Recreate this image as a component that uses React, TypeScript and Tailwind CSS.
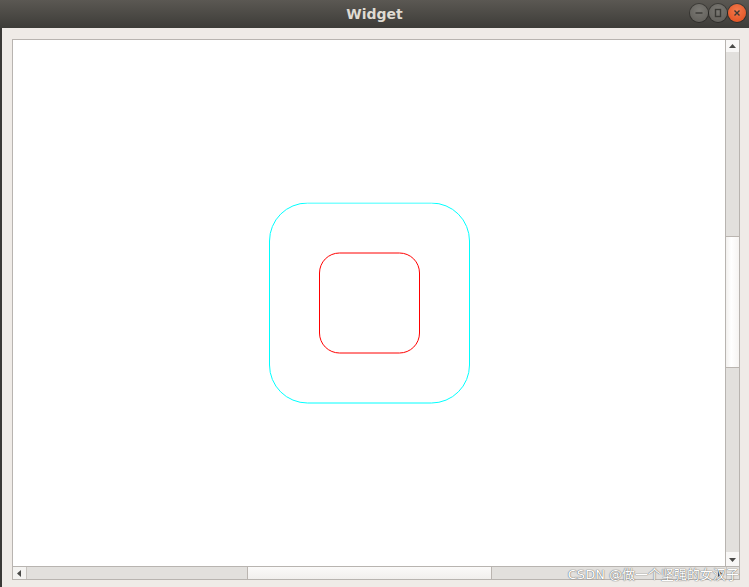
import React from "react";

function WinButton({ kind }: { kind: "min" | "max" | "close" }) {
  const bg =
    kind === "close"
      ? "bg-[radial-gradient(circle_at_50%_35%,#f27a4c,#df4b1c)]"
      : "bg-[radial-gradient(circle_at_50%_35%,#7b7974,#5d5b56)]";
  return (
    <div className={`flex h-[18px] w-[18px] items-center justify-center rounded-full ring-1 ring-black/30 ${bg}`}>
      <svg width="10" height="10" viewBox="0 0 10 10" fill="none" stroke="#3a3935" strokeWidth="1.4">
        {kind === "min" && <path d="M1.5 5h7" />}
        {kind === "max" && <rect x="2.5" y="1.5" width="5" height="7" />}
        {kind === "close" && <path d="M2.5 2.5l5 5M7.5 2.5l-5 5" />}
      </svg>
    </div>
  );
}

function Arrow({ dir }: { dir: "up" | "down" | "left" | "right" }) {
  const d = {
    up: "M1 6h7L4.5 2z",
    down: "M1 3h7L4.5 7z",
    left: "M6 1v7L2 4.5z",
    right: "M3 1v7l4-3.5z",
  }[dir];
  return (
    <svg width="9" height="9" viewBox="0 0 9 9">
      <path d={d} fill="#4a4a48" />
    </svg>
  );
}

export default function App() {
  return (
    <div className="relative flex h-[587px] w-[749px] flex-col overflow-hidden bg-[#efebe7] font-['DejaVu_Sans',sans-serif]">
      {/* title bar */}
      <div className="relative flex h-[28px] shrink-0 items-center justify-center bg-[linear-gradient(#5b5853,#3d3c38)]">
        <span className="text-[14px] font-bold text-[#dfdbd2]">Widget</span>
        <div className="absolute right-[3px] top-[4px] flex gap-[1px]">
          <WinButton kind="min" />
          <WinButton kind="max" />
          <WinButton kind="close" />
        </div>
      </div>

      {/* body */}
      <div className="flex-1 border-l-2 border-[#3a3936] pl-[10px] pt-[11px]">
        <div className="flex h-[541px] w-[728px] flex-col border border-[#b8b4b0]">
          <div className="flex h-[526px]">
            {/* canvas */}
            <div className="flex w-[712px] items-center justify-center bg-white">
              <svg width="202" height="202" viewBox="0 0 202 202" className="translate-x-[1px] translate-y-[0.5px]">
                <rect x="0.5" y="0.5" width="200" height="200" rx="38" ry="38" fill="none" stroke="#00ffff" strokeWidth="1" />
                <rect x="50.5" y="50.5" width="100" height="100" rx="20" ry="20" fill="none" stroke="#ff0000" strokeWidth="1" />
              </svg>
            </div>
            {/* vertical scrollbar */}
            <div className="flex w-[14px] flex-col border-l border-[#b8b4b0] bg-[#e2e0dd]">
              <div className="flex h-[12px] items-center justify-center bg-[#f8f7f6]">
                <Arrow dir="up" />
              </div>
              <div className="h-[184px]" />
              <div className="h-[132px] border-y border-[#bab5b0] bg-[linear-gradient(90deg,#f2f0ee,#ffffff_40%,#f6f4f2)]" />
              <div className="flex-1" />
              <div className="flex h-[14px] items-center justify-center bg-[#f8f7f6]">
                <Arrow dir="down" />
              </div>
            </div>
          </div>
          {/* horizontal scrollbar */}
          <div className="flex h-[13px] border-t border-[#b8b4b0] bg-[#e2e0dd]">
            <div className="flex w-[14px] items-center justify-center border-r border-[#c8c4c0] bg-[#f4f3f1]">
              <Arrow dir="left" />
            </div>
            <div className="w-[220px]" />
            <div className="w-[245px] border-x border-[#bab5b0] bg-[linear-gradient(#fbfaf9,#f1efed)]" />
            <div className="flex-1" />
            <div className="flex w-[14px] items-center justify-center bg-[#e2e0dd]">
              <Arrow dir="right" />
            </div>
            <div className="w-[13px] border-l border-[#c8c4c0] bg-[#e2e0dd]" />
          </div>
        </div>
      </div>

      {/* watermark */}
      <div className="absolute bottom-[6px] right-[10px] text-[13px] leading-none text-white [text-shadow:0_0_1px_#666,0_0_1px_#666] font-['DejaVu_Sans','Noto_Sans_CJK_SC',sans-serif]">
        CSDN @做一个坚强的女汉子
      </div>
    </div>
  );
}
